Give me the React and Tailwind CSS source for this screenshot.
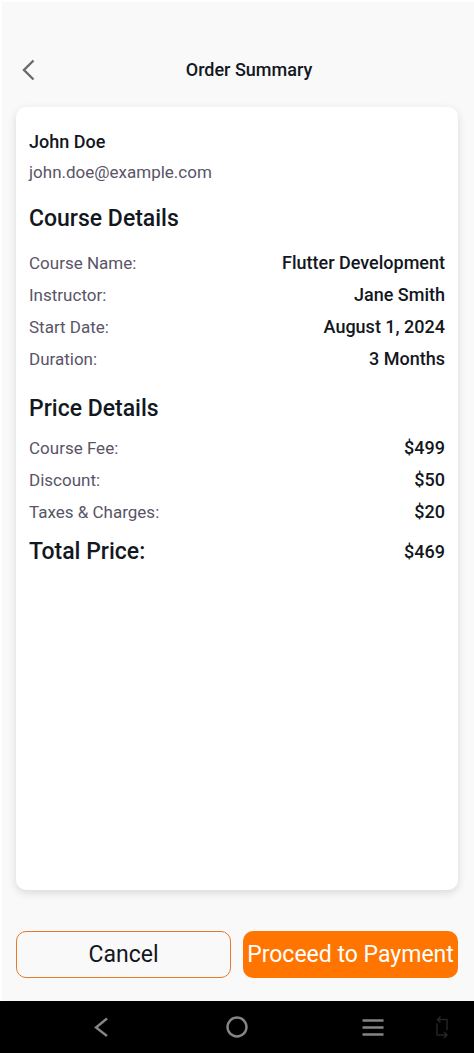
import React from "react";

const courseRows = [
  ["Course Name:", "Flutter Development"],
  ["Instructor:", "Jane Smith"],
  ["Start Date:", "August 1, 2024"],
  ["Duration:", "3 Months"],
];

const priceRows = [
  ["Course Fee:", "$499"],
  ["Discount:", "$50"],
  ["Taxes & Charges:", "$20"],
];

function Rows({ items }) {
  return (
    <dl className="flex flex-col gap-2">
      {items.map(([label, value]) => (
        <div key={label} className="flex items-center justify-between leading-6">
          <dt className="text-[17px] text-[#595468]">{label}</dt>
          <dd className="text-[18px] font-medium">{value}</dd>
        </div>
      ))}
    </dl>
  );
}

function SystemBar() {
  return (
    <nav aria-label="System" className="grid h-[52px] grid-cols-[64px_1fr_1fr_1fr] items-center bg-black text-[#858585]">
      <span />
      <button type="button" aria-label="Back" className="flex w-[73px] justify-center">
        <svg width="24" height="24" viewBox="0 0 24 24" fill="none" stroke="currentColor" strokeWidth="2.4">
          <path d="M18 3.5 7 12.5 18 21" />
        </svg>
      </button>
      <button type="button" aria-label="Home" className="flex w-[73px] justify-center">
        <svg width="24" height="24" viewBox="0 0 24 24" fill="none" stroke="currentColor" strokeWidth="2.4">
          <circle cx="12" cy="12" r="9.5" />
        </svg>
      </button>
      <div className="flex items-center justify-between pr-5 pl-6">
        <button type="button" aria-label="Recent apps">
          <svg width="24" height="24" viewBox="0 0 24 24" fill="none" stroke="currentColor" strokeWidth="2.4">
            <path d="M1.5 5.5h21M1.5 12.5h21M1.5 19.5h21" />
          </svg>
        </button>
        <button type="button" aria-label="Rotate screen" className="text-[#252525]">
          <svg width="24" height="24" viewBox="0 0 24 24" fill="none" stroke="currentColor" strokeWidth="1.5">
            <path d="M17 15V4.500H7.500M10.500 1.500l-3 3 3 3M7 8.500V20h10M14 17l3 3-3 3" />
          </svg>
        </button>
      </div>
    </nav>
  );
}

export default function App() {
  return (
    <div className="flex min-h-screen flex-col bg-[#f9f9f9] font-['Roboto',sans-serif] text-[#131722]">
      <div className="flex flex-1 flex-col border-t-2 border-l-2 border-white pr-4 pl-[14px]">
        <header className="flex items-center pt-14 pb-[25px]">
          <button type="button" aria-label="Go back" className="flex size-6 items-center justify-center text-[#6b6b6b]">
            <svg width="24" height="24" viewBox="0 0 24 24" fill="none" stroke="currentColor" strokeWidth="2.4">
              <path d="M17.5 2.500 8 12l9.500 9.500" />
            </svg>
          </button>
          <h1 className="flex-1 text-center text-[18px] leading-6 font-medium">Order Summary</h1>
        </header>

        <main className="flex flex-1 flex-col pb-[23px]">
          <section className="flex-1 rounded-[10px] bg-white px-[13px] pt-6 pb-6 shadow-[0_3px_8px_rgba(0,0,0,0.13)]">
            <p className="text-[18px] leading-[22px] font-medium">John Doe</p>
            <p className="mt-2 text-[17px] leading-[22px] text-[#595468]">john.doe@example.com</p>

            <h2 className="mt-[22px] mb-[18px] text-[23px] leading-7 font-medium">Course Details</h2>
            <Rows items={courseRows} />

            <h2 className="mt-6 mb-[13px] text-[23px] leading-7 font-medium">Price Details</h2>
            <Rows items={priceRows} />

            <div className="mt-[14px] flex items-center justify-between">
              <h2 className="text-[23px] leading-7 font-medium">Total Price:</h2>
              <span className="text-[18px] leading-7 font-medium">$469</span>
            </div>
          </section>

          <div className="mt-[41px] grid grid-cols-2 gap-3">
            <button type="button" className="h-[47px] rounded-[10px] border border-[#e67a28] text-[23px] leading-7 whitespace-nowrap">
              Cancel
            </button>
            <button type="button" className="h-[47px] rounded-[10px] bg-[#ff7500] text-[23px] leading-7 whitespace-nowrap text-white">
              Proceed to Payment
            </button>
          </div>
        </main>
      </div>
      <SystemBar />
    </div>
  );
}
